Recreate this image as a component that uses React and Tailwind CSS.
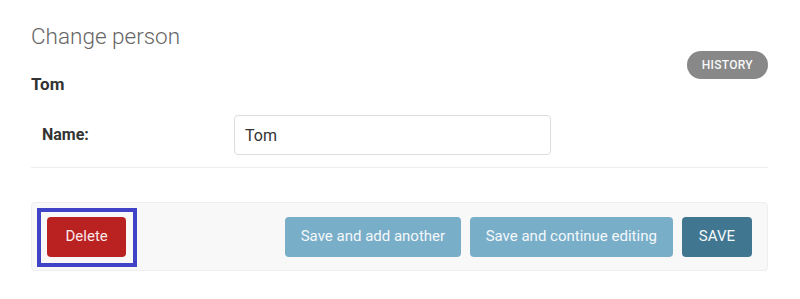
import React from "react";

export default function App() {
  return (
    <div className="w-[800px] h-[299px] bg-white font-['Roboto',sans-serif] text-[#333] pl-[31px] pr-[32px] pt-[20px]">
      <div className="flex justify-between">
        <div>
          <h1 className="text-[22.5px] leading-[32px] font-light text-[#666]">Change person</h1>
          <h2 className="mt-[20px] text-[17px] leading-[24px] font-bold text-[#333]">Tom</h2>
        </div>
        <div className="pt-[31px]">
          <a className="flex items-center h-[28px] px-[15px] rounded-full bg-[#888] text-[12px] font-medium tracking-[0.3px] text-[#f7f7f7]">
            HISTORY
          </a>
        </div>
      </div>

      <fieldset className="mt-[8px]">
        <div className="flex items-center pt-[11px] pb-[12px] pl-[11px] border-b border-[#eee]">
          <label className="w-[192px] text-[16px] font-bold text-[#333]">Name:</label>
          <input
            type="text"
            defaultValue="Tom"
            className="w-[317px] h-[40px] px-[10px] rounded-[4px] border border-[#ddd] text-[16px] text-[#333] outline-none"
          />
        </div>
      </fieldset>

      <div className="mt-[34px] flex items-center h-[69px] px-[15px] border border-[#eee] rounded-[4px] bg-[#f8f8f8]">
        <div className="relative">
          <a className="flex items-center h-[40px] px-[18.5px] rounded-[4px] bg-[#ba2121] text-[15px] text-[#fbeaea]">
            Delete
          </a>
          <span className="absolute -left-[10px] -top-[9px] -right-[11px] -bottom-[10px] border-[4px] border-[#4143c6] pointer-events-none" />
        </div>
        <div className="ml-auto flex gap-[9px]">
          <button className="h-[40px] px-[15.5px] rounded-[4px] bg-[#79aec8] text-[15px] text-[#f3f8fb]">
            Save and add another
          </button>
          <button className="h-[40px] px-[16px] rounded-[4px] bg-[#79aec8] text-[15px] text-[#f3f8fb]">
            Save and continue editing
          </button>
          <button className="h-[40px] px-[17px] rounded-[4px] bg-[#417690] text-[15px] text-[#f3f8fb]">
            SAVE
          </button>
        </div>
      </div>
    </div>
  );
}
